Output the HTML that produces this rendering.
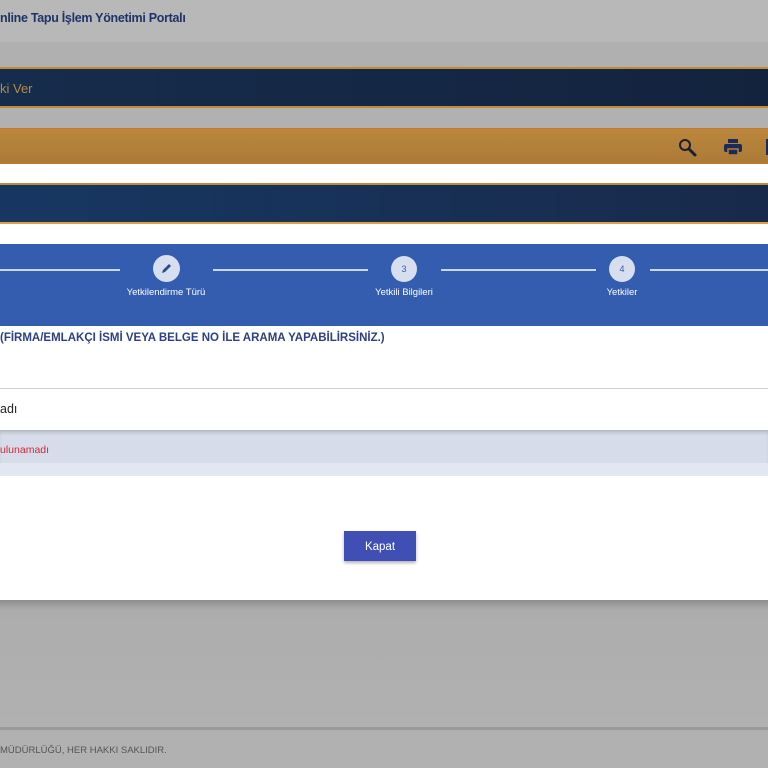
<!DOCTYPE html>
<html><head><meta charset="utf-8"><style>
*{margin:0;padding:0;box-sizing:border-box}
body{width:768px;height:768px;overflow:hidden;background:#b1b1b1;font-family:"Liberation Sans",sans-serif;position:relative}
.a{position:absolute;left:0;width:768px}
</style></head><body>
<div class="a" style="top:0;height:42px;background:#b8b8b8;box-shadow:0 3px 6px rgba(0,0,0,.3)"></div>
<div class="a" style="top:11px;left:0;font-size:12.5px;font-weight:bold;color:#1e3468;letter-spacing:-0.3px">nline Tapu İşlem Yönetimi Portalı</div>
<div class="a" style="top:42px;height:25px;background:#b0b0b0"></div>
<div class="a" style="top:67px;height:41px;background:linear-gradient(90deg,#162c4c,#13233e);border-top:2px solid #c08a38;border-bottom:2px solid #c08a38"></div>
<div class="a" style="top:81px;font-size:13px;color:#b58a44">ki Ver</div>
<div class="a" style="top:128px;height:36px;background:linear-gradient(#bb873c,#ab7a37);border-top:1px solid #c47a2a;border-bottom:1px solid #c47a2a"></div>
<svg style="position:absolute;left:678px;top:138px" width="20" height="20" viewBox="0 0 20 20"><circle cx="7" cy="7" r="5" fill="none" stroke="#1a1f33" stroke-width="2"/><path d="M11 11l6 6" stroke="#1a1f33" stroke-width="3" stroke-linecap="round"/></svg>
<svg style="position:absolute;left:723px;top:139px" width="20" height="18" viewBox="0 0 20 18"><rect x="5" y="0" width="10" height="4" fill="#1c2a55"/><rect x="1" y="5" width="18" height="8" rx="2" fill="#1c2a55"/><rect x="5" y="10" width="10" height="6" fill="#1c2a55" stroke="#b07f3a" stroke-width="1.5"/></svg>
<div style="position:absolute;left:766px;top:139px;width:2px;height:16px;background:#1c2a55"></div>
<div class="a" style="top:164px;height:19px;background:#fff"></div>
<div class="a" style="top:183px;height:41px;background:linear-gradient(90deg,#173762,#182a4b);border-top:2px solid #c08a38;border-bottom:2px solid #e0a040"></div>
<div class="a" style="top:224px;height:20px;background:#fff"></div>
<div class="a" style="top:244px;height:82px;background:#345db0"></div>
<div style="position:absolute;top:269px;left:0;width:120px;height:2px;background:#c8d8f0"></div>
<div style="position:absolute;top:269px;left:213px;width:155px;height:2px;background:#c8d8f0"></div>
<div style="position:absolute;top:269px;left:441px;width:155px;height:2px;background:#c8d8f0"></div>
<div style="position:absolute;top:269px;left:650px;width:118px;height:2px;background:#c8d8f0"></div>
<div style="position:absolute;left:153px;top:255px;width:27px;height:27px;border-radius:50%;background:#d6def0"></div>
<svg style="position:absolute;left:160px;top:262px" width="13" height="13" viewBox="0 0 13 13"><path d="M2 11l1-3 6-6 2 2-6 6z" fill="#2c4a8e"/></svg>
<div style="position:absolute;left:391px;top:256px;width:26px;height:26px;border-radius:50%;background:#d6def0;color:#3a5aa8;font-size:9px;text-align:center;line-height:26px">3</div>
<div style="position:absolute;left:609px;top:256px;width:26px;height:26px;border-radius:50%;background:#d6def0;color:#3a5aa8;font-size:9px;text-align:center;line-height:26px">4</div>
<div style="position:absolute;left:106px;top:287px;width:120px;text-align:center;font-size:9.5px;color:#fff">Yetkilendirme Türü</div>
<div style="position:absolute;left:344px;top:287px;width:120px;text-align:center;font-size:9.5px;color:#fff">Yetkili Bilgileri</div>
<div style="position:absolute;left:562px;top:287px;width:120px;text-align:center;font-size:9.5px;color:#fff">Yetkiler</div>
<div class="a" style="top:326px;height:150px;background:#fff"></div>
<div class="a" style="top:332px;font-size:11.5px;font-weight:bold;color:#2d3f85">(FİRMA/EMLAKÇI İSMİ VEYA BELGE NO İLE ARAMA YAPABİLİRSİNİZ.)</div>
<div class="a" style="top:388px;height:1px;background:#d0d0d0"></div>
<div class="a" style="top:402px;font-size:12.5px;color:#222">adı</div>
<div class="a" style="top:430px;height:33px;background:#d6dcea;box-shadow:inset 0 4px 4px -2px rgba(0,0,0,.2)"></div>
<div class="a" style="top:444px;font-size:10.5px;color:#d2293a">ulunamadı</div>
<div class="a" style="top:463px;height:13px;background:#e3e7f1"></div>
<div class="a" style="top:476px;height:124px;background:#fff"></div>
<div style="position:absolute;left:344px;top:531px;width:72px;height:30px;background:#3f4fb4;color:#fff;font-size:11.5px;text-align:center;line-height:32px;box-shadow:0 2px 3px rgba(0,0,0,.3)">Kapat</div>
<div class="a" style="top:600px;height:128px;background:linear-gradient(#8e8e8e,#adadad 8%,#b1b1b1)"></div>
<div class="a" style="top:727px;height:3px;background:#9a9a9a"></div>
<div class="a" style="top:745px;font-size:9.5px;color:#555">MÜDÜRLÜĞÜ, HER HAKKI SAKLIDIR.</div>
</body></html>
